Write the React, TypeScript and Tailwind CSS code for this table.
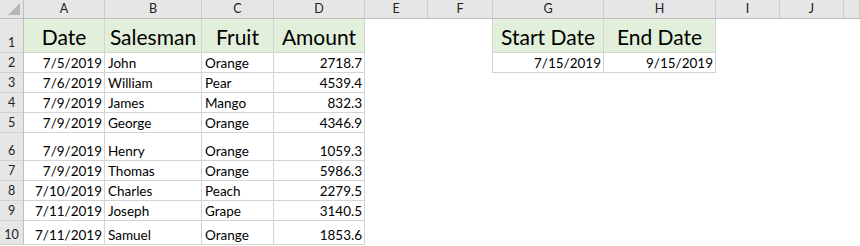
import React from 'react';

// Sheet geometry, taken from the screenshot
const colWidths = [24, 81, 97, 72, 91, 63, 65, 111, 112, 64, 64, 16];
const colLetters = ['A', 'B', 'C', 'D', 'E', 'F', 'G', 'H', 'I', 'J', ''];

interface Sale {
    date: string;
    name: string;
    fruit: string;
    amount: string;
}

const sales: Sale[] = [
    { date: '7/5/2019', name: 'John', fruit: 'Orange', amount: '2718.7' },
    { date: '7/6/2019', name: 'William', fruit: 'Pear', amount: '4539.4' },
    { date: '7/9/2019', name: 'James', fruit: 'Mango', amount: '832.3' },
    { date: '7/9/2019', name: 'George', fruit: 'Orange', amount: '4346.9' },
    { date: '7/9/2019', name: 'Henry', fruit: 'Orange', amount: '1059.3' },
    { date: '7/9/2019', name: 'Thomas', fruit: 'Orange', amount: '5986.3' },
    { date: '7/10/2019', name: 'Charles', fruit: 'Peach', amount: '2279.5' },
    { date: '7/11/2019', name: 'Joseph', fruit: 'Grape', amount: '3140.5' },
    { date: '7/11/2019', name: 'Samuel', fruit: 'Orange', amount: '1853.6' },
];

// row heights for rows 2..10 (row 6 is taller)
const rowHeights = [20, 20, 20, 20, 28, 20, 20, 20, 24];

type Cell = { text?: string; align?: 'left' | 'right' | 'center'; kind?: 'head' | 'data' | 'none' };

const Td = ({ cell, leftEdge }: { cell: Cell; leftEdge?: boolean }) => {
    const kind = cell.kind ?? 'none';
    const base = 'flex items-end overflow-hidden whitespace-nowrap';
    const border =
        kind === 'none'
            ? leftEdge
                ? 'border-r border-r-[#d4d4d4]'
                : ''
            : 'border-r border-b border-[#d4d4d4]';
    const bg = kind === 'head' ? 'bg-[#e2efda]' : 'bg-white';
    const size = kind === 'head' ? 'text-[21px] leading-[28px] pb-[1px]' : 'text-[13.5px] leading-[17px]';
    const align =
        cell.align === 'right' ? 'justify-end pr-[2px]' : cell.align === 'center' ? 'justify-center' : 'justify-start pl-[3px]';
    return (
        <div className={`${base} ${border} ${bg} ${size} ${align} text-black`}>
            {cell.text}
        </div>
    );
};

const RowHead = ({ n }: { n: number }) => (
    <div className="flex items-end justify-center bg-[#e6e6e6] border-r border-b border-r-[#bdbdbd] border-b-[#d0d0d0] text-[12.5px] leading-[17px] pb-[1px] text-[#222]">
        {n}
    </div>
);

export default function App() {
    const heights = [19, 34, ...rowHeights];

    const rows: Cell[][] = [
        [
            { text: 'Date', align: 'center', kind: 'head' },
            { text: 'Salesman', align: 'center', kind: 'head' },
            { text: 'Fruit', align: 'center', kind: 'head' },
            { text: 'Amount', align: 'center', kind: 'head' },
            {},
            {},
            { text: 'Start Date', align: 'center', kind: 'head' },
            { text: 'End Date', align: 'center', kind: 'head' },
            {},
            {},
            {},
        ],
        ...sales.map((s, i): Cell[] => [
            { text: s.date, align: 'right', kind: 'data' },
            { text: s.name, kind: 'data' },
            { text: s.fruit, kind: 'data' },
            { text: s.amount, align: 'right', kind: 'data' },
            {},
            {},
            i === 0 ? { text: '7/15/2019', align: 'right', kind: 'data' } : {},
            i === 0 ? { text: '9/15/2019', align: 'right', kind: 'data' } : {},
            {},
            {},
            {},
        ]),
    ];

    return (
        <div
            className="w-[860px] h-[246px] overflow-hidden bg-white grid"
            style={{ fontFamily: 'Lato, "Open Sans", sans-serif' }}
        >
            <div
                className="grid"
                style={{
                    gridTemplateColumns: colWidths.map((w) => `${w}px`).join(' '),
                    gridTemplateRows: heights.map((h) => `${h}px`).join(' '),
                }}
            >
                {/* column header strip */}
                <div className="relative bg-[#e6e6e6] border-r border-b border-r-[#bdbdbd] border-b-[#bdbdbd]">
                    <div className="absolute right-[3px] bottom-[3px] w-0 h-0 border-l-[12px] border-l-transparent border-b-[12px] border-b-[#b8b8b8]" />
                </div>
                {colLetters.map((l, i) => (
                    <div
                        key={i}
                        className="flex items-center justify-center bg-[#e6e6e6] border-r border-b border-r-[#cdcdcd] border-b-[#bdbdbd] text-[12.5px] text-[#222] pt-[1px]"
                    >
                        {l}
                    </div>
                ))}

                {rows.map((row, r) => (
                    <React.Fragment key={r}>
                        <RowHead n={r + 1} />
                        {row.map((cell, c) => (
                            <Td
                                key={c}
                                cell={cell}
                                leftEdge={c === 5 && r < 2}
                            />
                        ))}
                    </React.Fragment>
                ))}
            </div>
        </div>
    );
}
